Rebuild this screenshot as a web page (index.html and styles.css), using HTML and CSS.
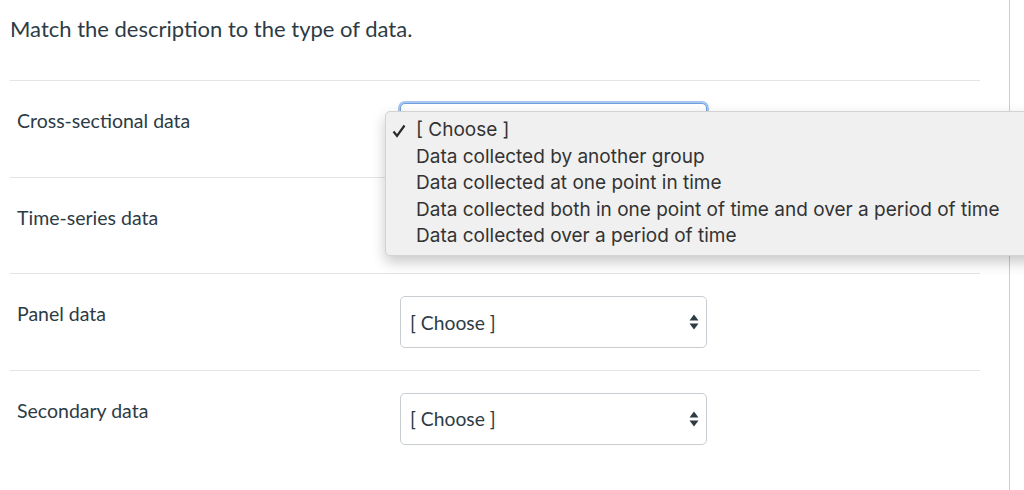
FILE: index.html
```html
<!DOCTYPE html>
<html lang="en">
<head>
  <meta charset="UTF-8">
  <title>Matching question</title>
  <link rel="stylesheet" href="styles.css">
</head>
<body>
  <div class="page">
    <div class="question">
      <div class="question__text">Match the description to the type of data.</div>

      <div class="answer">
        <div class="answer__label">Cross-sectional data</div>
        <div class="select select--focus">
          <span class="select__value">[ Choose ]</span>
          <svg class="select__arrows" width="10" height="16" viewBox="0 0 10 16"><path d="M0.5 6.5 5 0.5 9.5 6.5Z M0.5 9.5 5 15.5 9.5 9.5Z"/></svg>
          <!-- открытый список -->
          <ul class="menu">
            <li class="menu__item">
              <svg class="menu__check" width="14" height="14" viewBox="0 0 14 14"><path d="M1.5 7.5 5 12 12.5 1.5"/></svg>[ Choose ]
            </li>
            <li class="menu__item">Data collected by another group</li>
            <li class="menu__item">Data collected at one point in time</li>
            <li class="menu__item">Data collected both in one point of time and over a period of time</li>
            <li class="menu__item">Data collected over a period of time</li>
          </ul>
        </div>
      </div>

      <div class="answer">
        <div class="answer__label">Time-series data</div>
        <div class="select">
          <span class="select__value">[ Choose ]</span>
          <svg class="select__arrows" width="10" height="16" viewBox="0 0 10 16"><path d="M0.5 6.5 5 0.5 9.5 6.5Z M0.5 9.5 5 15.5 9.5 9.5Z"/></svg>
        </div>
      </div>

      <div class="answer">
        <div class="answer__label">Panel data</div>
        <div class="select">
          <span class="select__value">[ Choose ]</span>
          <svg class="select__arrows" width="10" height="16" viewBox="0 0 10 16"><path d="M0.5 6.5 5 0.5 9.5 6.5Z M0.5 9.5 5 15.5 9.5 9.5Z"/></svg>
        </div>
      </div>

      <div class="answer">
        <div class="answer__label">Secondary data</div>
        <div class="select">
          <span class="select__value">[ Choose ]</span>
          <svg class="select__arrows" width="10" height="16" viewBox="0 0 10 16"><path d="M0.5 6.5 5 0.5 9.5 6.5Z M0.5 9.5 5 15.5 9.5 9.5Z"/></svg>
        </div>
      </div>
    </div>
  </div>
</body>
</html>
```

FILE: styles.css
```css
html, body {
  height: 100%;
  margin: 0;
  overflow: hidden;
  background: #fff;
}

body {
  font-family: Lato, "Open Sans", sans-serif;
  color: #2d3b45;
}

.page {
  width: 1010px;
  height: 100%;
  border-right: 1px solid #c7cdd1;
  box-sizing: border-box;
}

.question {
  width: 970px;
  margin-left: 10px;
}

.question__text {
  height: 65px;
  padding-top: 15px;
  font-size: 22px;
  line-height: 28px;
  border-bottom: 1px solid #e2e4e6;
}

.answer {
  display: flex;
  align-items: flex-start;
  padding: 22px 0 21.67px 7px;
  border-bottom: 1px solid #e2e4e6;
}

.answer:last-child {
  border-bottom: 0;
}

.answer__label {
  width: 383px;
  padding-top: 6px;
  font-size: 19.5px;
  line-height: 24px;
}

.select {
  position: relative;
  display: flex;
  align-items: center;
  justify-content: space-between;
  width: 307px;
  height: 52px;
  padding: 0 7px 0 9px;
  box-sizing: border-box;
  border: 1px solid #c7cdd1;
  border-radius: 5px;
  background: #fff;
}

.select--focus {
  border-color: #6f9fe0;
  box-shadow: 0 0 0 2px #a9c6f0;
}

.select__value {
  font-size: 19.3px;
}

.select__arrows {
  fill: #2d3b45;
}

/* выпадающий список (macOS) */
.menu {
  position: absolute;
  top: 7px;
  left: -16px;
  z-index: 2;
  width: 660px;
  margin: 0;
  padding: 5px 0;
  list-style: none;
  background: #f0f0f0;
  border: 1px solid #d3d3d3;
  border-radius: 5px;
  box-shadow: 0 6px 14px rgba(0, 0, 0, 0.22);
  font-family: Inter, "Liberation Sans", sans-serif;
  font-size: 19px;
  color: #333;
}

.menu__item {
  position: relative;
  padding-left: 30px;
  line-height: 26.5px;
  white-space: nowrap;
}

.menu__check {
  position: absolute;
  left: 6px;
  top: 7px;
  fill: none;
  stroke: #2a2a2a;
  stroke-width: 2.2;
}
```
